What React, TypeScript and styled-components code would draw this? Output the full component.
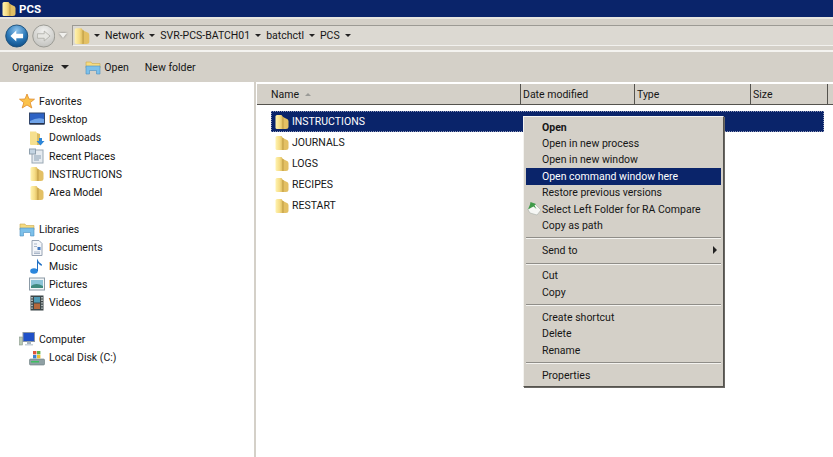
import { FC } from "react";
import styled, { createGlobalStyle } from "styled-components";

const GlobalStyle = createGlobalStyle`
	html, body {
		margin: 0;
		padding: 0;
		background: #fff;
		overflow: hidden;
	}

	* {
		box-sizing: border-box;
	}
`;

const FolderIcon: FC<{ size?: number }> = ({ size = 16 }) => (
	<svg width={size} height={size} viewBox="0 0 16 16">
		<defs>
			<linearGradient id="folderFill" x1="0" y1="0" x2="1" y2="0">
				<stop offset="0" stopColor="#fff3b0" />
				<stop offset="0.55" stopColor="#f6dd86" />
				<stop offset="1" stopColor="#d9b658" />
			</linearGradient>
		</defs>
		<path d="M1.5 2.5 Q1.5 1 3 1 L7.5 1 L9 3 L9 15 L3 15 Q1.5 15 1.5 13.5 Z" fill="url(#folderFill)" />
		<path d="M9 3 L12 4.5 Q14.5 5 14.5 7 L14.5 13 Q14.5 15 12 15 L9 15 Z" fill="#e3c064" />
		<path d="M9 3 L9 15" stroke="#b8963c" strokeWidth="0.8" />
	</svg>
);

const StarIcon = () => (
	<svg width="16" height="16" viewBox="0 0 16 16">
		<path
			d="M8 1 L10 6 L15.5 6.2 L11.2 9.6 L12.8 15 L8 12 L3.2 15 L4.8 9.6 L.5 6.2 L6 6 Z"
			fill="#fbc24a"
			stroke="#e08a2a"
			strokeWidth="0.8"
		/>
	</svg>
);

const DesktopIcon = () => (
	<svg width="16" height="16" viewBox="0 0 16 16">
		<rect x="0.5" y="2" width="15" height="11" fill="#2d62c4" stroke="#33476b" />
		<path d="M1 10 Q8 6 15 8 L15 12 L1 12 Z" fill="#6fa3e8" />
		<rect x="1" y="12" width="14" height="1.5" fill="#27324a" />
	</svg>
);

const DownloadsIcon = () => (
	<svg width="16" height="16" viewBox="0 0 16 16">
		<path d="M1 1.5 L7 1.5 L8 3 L8 15 L2 15 Q1 15 1 14 Z" fill="#f6e08e" />
		<path d="M8 3 L11 4 L11 15 L8 15 Z" fill="#dcbc62" />
		<path d="M10 8 L13 8 L13 11 L15.5 11 L11.5 15.5 L7.5 11 L10 11 Z" fill="#2d86d8" />
	</svg>
);

const RecentIcon = () => (
	<svg width="16" height="16" viewBox="0 0 16 16">
		<rect x="3" y="2" width="11" height="13" fill="#e6ebf0" stroke="#9aa8b4" />
		<rect x="0.5" y="1" width="6" height="5" fill="#c4d4e2" stroke="#8fa0ae" />
		<path d="M5 8 H12 M5 10 H12 M5 12 H10" stroke="#8aa0b4" />
	</svg>
);

const LibraryIcon = () => (
	<svg width="16" height="16" viewBox="0 0 16 16">
		<path d="M1 3 L6 3 L7 4.5 L15 4.5 L15 9 L1 9 Z" fill="#f6db80" stroke="#c9a94e" strokeWidth="0.6" />
		<path d="M1 7 L15 7 L15 15 L11.5 15 L11.5 11.5 L4.5 11.5 L4.5 15 L1 15 Z" fill="#7cc0ea" stroke="#4b8fc0" strokeWidth="0.6" />
	</svg>
);

const DocumentIcon = () => (
	<svg width="16" height="16" viewBox="0 0 16 16">
		<path d="M3 .5 L10 .5 L13 3.5 L13 15.5 L3 15.5 Z" fill="#f4f6fa" stroke="#98a4b4" />
		<path d="M5 4 H8 M5 6.5 H8 M5 12 H11 M5 13.5 H11" stroke="#a9b6c8" />
		<rect x="8.5" y="7" width="3" height="3" fill="#4178c0" />
	</svg>
);

const MusicIcon = () => (
	<svg width="16" height="16" viewBox="0 0 16 16">
		<ellipse cx="5" cy="13" rx="3.8" ry="2.7" fill="#2b86dc" />
		<path d="M8 13 L8 .5 Q9 4 13 6.5 L12.5 8 Q10 6.5 9 5 L9 13 Z" fill="#1f6fc4" />
	</svg>
);

const PicturesIcon = () => (
	<svg width="16" height="16" viewBox="0 0 16 16">
		<rect x="0.5" y="2" width="15" height="12" fill="#f2f6f8" stroke="#8b9aa6" />
		<rect x="2" y="4" width="12" height="8" fill="#8cc4d8" />
		<path d="M2 10 Q7 6 14 10 L14 12 L2 12 Z" fill="#3f8a7e" />
	</svg>
);

const VideosIcon = () => (
	<svg width="16" height="16" viewBox="0 0 16 16">
		<rect x="1.5" y="0.5" width="13" height="15" fill="#3c4648" />
		<rect x="5" y="2" width="6" height="5.5" fill="#4f9ab4" />
		<rect x="5" y="8.5" width="6" height="5.5" fill="#b4683c" />
		<path d="M3 2 V14 M13 2 V14" stroke="#d8e0e0" strokeWidth="1.4" strokeDasharray="1.4 1.2" />
	</svg>
);

const ComputerIcon = () => (
	<svg width="16" height="16" viewBox="0 0 16 16">
		<rect x="0.5" y="6" width="3" height="8" fill="#b8c8b0" stroke="#88988a" strokeWidth="0.6" />
		<rect x="4" y="1.5" width="11.5" height="9" fill="#1f50c8" stroke="#8a96a4" />
		<rect x="8" y="10.5" width="4" height="2.5" fill="#a8b4be" />
		<rect x="6" y="13" width="8" height="1.5" fill="#c8d2da" />
	</svg>
);

const DiskIcon = () => (
	<svg width="16" height="16" viewBox="0 0 16 16">
		<rect x="0.5" y="9" width="15" height="6" rx="1" fill="#8fa0a4" stroke="#66787c" strokeWidth="0.6" />
		<rect x="2" y="11" width="8" height="1.5" fill="#3cc060" />
		<rect x="4" y="1" width="3.4" height="3.4" fill="#e0563a" />
		<rect x="8" y="1" width="3.4" height="3.4" fill="#62b048" />
		<rect x="4" y="5" width="3.4" height="3.4" fill="#3c80d0" />
		<rect x="8" y="5" width="3.4" height="3.4" fill="#f0c030" />
	</svg>
);

const CompareIcon = () => (
	<svg width="15" height="15" viewBox="0 0 15 15">
		<path d="M0.5 8 L7 2 L14 9 L10 14 L3 12 Z" fill="#f6f7f5" stroke="#a8aea8" strokeWidth="0.6" />
		<path d="M1 8.5 L3 3.5 L3.5 1 L9 3 L7.5 4.5 L9.5 8 L6.5 5.5 L4.5 6.5 Z" fill="#3f9a48" />
	</svg>
);

const BackButton = () => (
	<svg width="24" height="24" viewBox="0 0 26 26">
		<defs>
			<radialGradient id="backFill" cx="0.5" cy="0.25" r="0.8">
				<stop offset="0" stopColor="#8fc4ec" />
				<stop offset="0.55" stopColor="#2a78b8" />
				<stop offset="1" stopColor="#0e4a80" />
			</radialGradient>
		</defs>
		<circle cx="13" cy="13" r="12.2" fill="url(#backFill)" stroke="#1c4f78" />
		<path d="M6 13 L12.5 7 L12.5 10.5 L20 10.5 L20 15.5 L12.5 15.5 L12.5 19 Z" fill="#fff" />
	</svg>
);

const ForwardButton = () => (
	<svg width="24" height="24" viewBox="0 0 26 26">
		<defs>
			<radialGradient id="forwardFill" cx="0.5" cy="0.3" r="0.8">
				<stop offset="0" stopColor="#f2f2f0" />
				<stop offset="1" stopColor="#bcbcb8" />
			</radialGradient>
		</defs>
		<circle cx="13" cy="13" r="12.2" fill="url(#forwardFill)" stroke="#96968f" />
		<path d="M20 13 L13.5 7.5 L13.5 10.5 L6 10.5 L6 15.5 L13.5 15.5 L13.5 18.5 Z" fill="#e6e6e2" stroke="#a6a6a0" strokeWidth="0.8" />
	</svg>
);

interface INavItem {
	label: string;
	icon: JSX.Element;
}

interface INavGroup {
	title: string;
	icon: JSX.Element;
	items: INavItem[];
}

const navGroups: INavGroup[] = [
	{
		title: "Favorites",
		icon: <StarIcon />,
		items: [
			{ label: "Desktop", icon: <DesktopIcon /> },
			{ label: "Downloads", icon: <DownloadsIcon /> },
			{ label: "Recent Places", icon: <RecentIcon /> },
			{ label: "INSTRUCTIONS", icon: <FolderIcon /> },
			{ label: "Area Model", icon: <FolderIcon /> },
		],
	},
	{
		title: "Libraries",
		icon: <LibraryIcon />,
		items: [
			{ label: "Documents", icon: <DocumentIcon /> },
			{ label: "Music", icon: <MusicIcon /> },
			{ label: "Pictures", icon: <PicturesIcon /> },
			{ label: "Videos", icon: <VideosIcon /> },
		],
	},
	{
		title: "Computer",
		icon: <ComputerIcon />,
		items: [{ label: "Local Disk (C:)", icon: <DiskIcon /> }],
	},
];

const breadcrumbs = ["Network", "SVR-PCS-BATCH01", "batchctl", "PCS"];

const columns = [
	{ label: "Name", width: 264, sorted: true },
	{ label: "Date modified", width: 114 },
	{ label: "Type", width: 116 },
	{ label: "Size", width: 77 },
];

const files = ["INSTRUCTIONS", "JOURNALS", "LOGS", "RECIPES", "RESTART"];

const menuGroups = [
	[
		{ label: "Open", bold: true },
		{ label: "Open in new process" },
		{ label: "Open in new window" },
		{ label: "Open command window here", active: true },
		{ label: "Restore previous versions" },
		{ label: "Select Left Folder for RA Compare", compare: true },
		{ label: "Copy as path" },
	],
	[{ label: "Send to", submenu: true }],
	[{ label: "Cut" }, { label: "Copy" }],
	[{ label: "Create shortcut" }, { label: "Delete" }, { label: "Rename" }],
	[{ label: "Properties" }],
];

const App: FC = () => {
	return (
		<Window>
			<GlobalStyle />
			<TitleBar>
				<FolderIcon />
				<TitleText>PCS</TitleText>
			</TitleBar>

			<AddressRow>
				<NavButtons>
					<BackButton />
					<ForwardButton />
					<HistoryCaret />
				</NavButtons>
				<AddressBar>
					<FolderIcon size={18} />
					<Crumbs>
						{breadcrumbs.map((crumb) => (
							<Crumb key={crumb}>
								<SmallCaret />
								{crumb}
							</Crumb>
						))}
						<SmallCaret />
					</Crumbs>
				</AddressBar>
			</AddressRow>

			<Toolbar>
				<OrganizeTool>
					Organize
					<ToolCaret />
				</OrganizeTool>
				<OpenTool>
					<LibraryIcon />
					Open
				</OpenTool>
				<ToolItem>New folder</ToolItem>
			</Toolbar>

			<Main>
				<NavPane>
					{navGroups.map((group) => (
						<NavGroup key={group.title}>
							<NavHeader>
								{group.icon}
								<span>{group.title}</span>
							</NavHeader>
							{group.items.map((item) => (
								<NavRow key={item.label}>
									{item.icon}
									<span>{item.label}</span>
								</NavRow>
							))}
						</NavGroup>
					))}
				</NavPane>

				<FilePane>
					<HeaderRow>
						{columns.map((column) => (
							<HeaderCell key={column.label} $width={column.width}>
								{column.label}
								{column.sorted && <SortCaret />}
							</HeaderCell>
						))}
					</HeaderRow>

					<FileList>
						{files.map((file, index) => (
							<FileRow key={file} $selected={index === 0}>
								<FolderIcon />
								<span>{file}</span>
							</FileRow>
						))}
					</FileList>

					<Menu>
						{menuGroups.map((group, index) => (
							<MenuGroup key={index} $first={index === 0}>
								{group.map((item) => (
									<MenuItem
										key={item.label}
										$active={"active" in item && !!item.active}
										$bold={"bold" in item && !!item.bold}
									>
										{"compare" in item && (
											<MenuIcon>
												<CompareIcon />
											</MenuIcon>
										)}
										{item.label}
										{"submenu" in item && <SubmenuArrow />}
									</MenuItem>
								))}
							</MenuGroup>
						))}
					</Menu>
				</FilePane>
			</Main>
		</Window>
	);
};

export default App;

const Window = styled.div`
	width: 833px;
	height: 457px;
	display: flex;
	flex-direction: column;
	overflow: hidden;
	background-color: #fff;
	color: #161616;
	font-family: "Roboto", "Liberation Sans", sans-serif;
	font-size: 10.5px;
`;

const TitleBar = styled.div`
	height: 17px;
	flex-shrink: 0;
	display: flex;
	align-items: center;
	gap: 2px;
	padding-left: 1px;
	background-color: #0a246a;
`;

const TitleText = styled.span`
	color: #fff;
	font-size: 11.5px;
	font-weight: 700;
`;

const AddressRow = styled.div`
	height: 35px;
	flex-shrink: 0;
	display: flex;
	align-items: center;
	gap: 5px;
	padding: 2px 0 0 5px;
	background-color: #d4d0c8;
	border-top: 2px solid #e8e6e0;
	border-bottom: 2px solid #f4f3f0;
`;

const NavButtons = styled.div`
	width: 62px;
	flex-shrink: 0;
	display: flex;
	align-items: center;
	gap: 3px;
`;

const HistoryCaret = styled.span`
	width: 0;
	height: 0;
	margin-left: 1px;
	border-left: 4px solid transparent;
	border-right: 4px solid transparent;
	border-top: 5px solid #f0efec;
	filter: drop-shadow(0 0 1px #777);
`;

const AddressBar = styled.div`
	flex: 1;
	height: 21px;
	display: flex;
	align-items: center;
	gap: 3px;
	background-color: #dcd9d2;
	border: 1px solid #9c9a94;
	border-right: none;
	border-bottom-color: #f2f1ee;
`;

const Crumbs = styled.div`
	display: flex;
	align-items: center;
	gap: 5px;
`;

const Crumb = styled.span`
	display: flex;
	align-items: center;
	gap: 5px;
`;

const SmallCaret = styled.span`
	width: 0;
	height: 0;
	border-left: 3px solid transparent;
	border-right: 3px solid transparent;
	border-top: 3px solid #222;
`;

const Toolbar = styled.div`
	height: 30px;
	flex-shrink: 0;
	display: flex;
	align-items: center;
	padding-left: 12px;
	background-color: #d4d0c8;
`;

const ToolItem = styled.span`
	display: flex;
	align-items: center;
	gap: 6px;
	margin-right: 16px;
`;

const OrganizeTool = styled(ToolItem)`
	gap: 8px;
`;

const OpenTool = styled(ToolItem)`
	gap: 3px;
`;

const ToolCaret = styled.span`
	width: 0;
	height: 0;
	border-left: 4px solid transparent;
	border-right: 4px solid transparent;
	border-top: 4px solid #222;
`;

const Main = styled.div`
	flex: 1;
	min-height: 0;
	display: flex;
`;

const NavPane = styled.nav`
	width: 256px;
	flex-shrink: 0;
	display: flex;
	flex-direction: column;
	gap: 18.5px;
	padding: 10px 0 0 19px;
	border-right: 2px solid #d4d0c8;
`;

const NavGroup = styled.div`
	display: flex;
	flex-direction: column;
`;

const NavHeader = styled.div`
	height: 18.3px;
	display: flex;
	align-items: center;
	gap: 4px;
`;

const NavRow = styled(NavHeader)`
	padding-left: 10px;
`;

const FilePane = styled.div`
	position: relative;
	flex: 1;
	min-width: 0;
	margin-left: 1px;
`;

const HeaderRow = styled.div`
	height: 21px;
	margin-top: 2px;
	display: flex;
	background-color: #d4d0c8;
	border-bottom: 1px solid #55534e;
`;

const HeaderCell = styled.div<{ $width: number }>`
	width: ${({ $width }) => $width}px;
	flex-shrink: 0;
	display: flex;
	align-items: center;
	gap: 6px;
	padding-left: 14px;
	border-right: 1px solid #55534e;

	&:not(:first-child) {
		padding-left: 2px;
	}
`;

const SortCaret = styled.span`
	width: 0;
	height: 0;
	border-left: 3px solid transparent;
	border-right: 3px solid transparent;
	border-bottom: 3px solid #9a9a96;
`;

const FileList = styled.ul`
	list-style: none;
	margin: 0;
	padding: 6px 0 0 14px;
`;

const FileRow = styled.li<{ $selected: boolean }>`
	width: 553px;
	height: 21px;
	display: flex;
	align-items: center;
	gap: 2px;
	padding-left: 3px;
	color: ${({ $selected }) => ($selected ? "#fff" : "#161616")};
	background-color: ${({ $selected }) => ($selected ? "#0a246a" : "transparent")};
	outline: ${({ $selected }) => ($selected ? "1px dotted #8f98b8" : "none")};
	outline-offset: -1px;
`;

const Menu = styled.div`
	position: absolute;
	top: 34px;
	left: 266px;
	width: 201px;
	height: 271px;
	padding: 2px 2px 0 2px;
	background-color: #d4d0c8;
	border: 1px solid #f4f3f0;
	border-right-color: #55534e;
	border-bottom-color: #55534e;
	box-shadow: 1px 1px 0 #6a6864;
`;

const MenuGroup = styled.div<{ $first: boolean }>`
	padding-top: ${({ $first }) => ($first ? "0" : "4px")};
	margin-top: ${({ $first }) => ($first ? "0" : "3.75px")};
	border-top: ${({ $first }) => ($first ? "none" : "1px solid #8f8d88")};
	box-shadow: ${({ $first }) => ($first ? "none" : "inset 0 1px 0 #f4f3f0")};
`;

const MenuItem = styled.div<{ $active: boolean; $bold: boolean }>`
	position: relative;
	height: 16.4px;
	display: flex;
	align-items: center;
	padding-left: 16px;
	font-weight: ${({ $bold }) => ($bold ? 700 : 400)};
	color: ${({ $active }) => ($active ? "#fff" : "#161616")};
	background-color: ${({ $active }) => ($active ? "#0a246a" : "transparent")};
`;

const MenuIcon = styled.span`
	position: absolute;
	left: 1px;
	top: 0;
	display: flex;
`;

const SubmenuArrow = styled.span`
	position: absolute;
	right: 4px;
	top: 4px;
	width: 0;
	height: 0;
	border-top: 4px solid transparent;
	border-bottom: 4px solid transparent;
	border-left: 4px solid #222;
`;
